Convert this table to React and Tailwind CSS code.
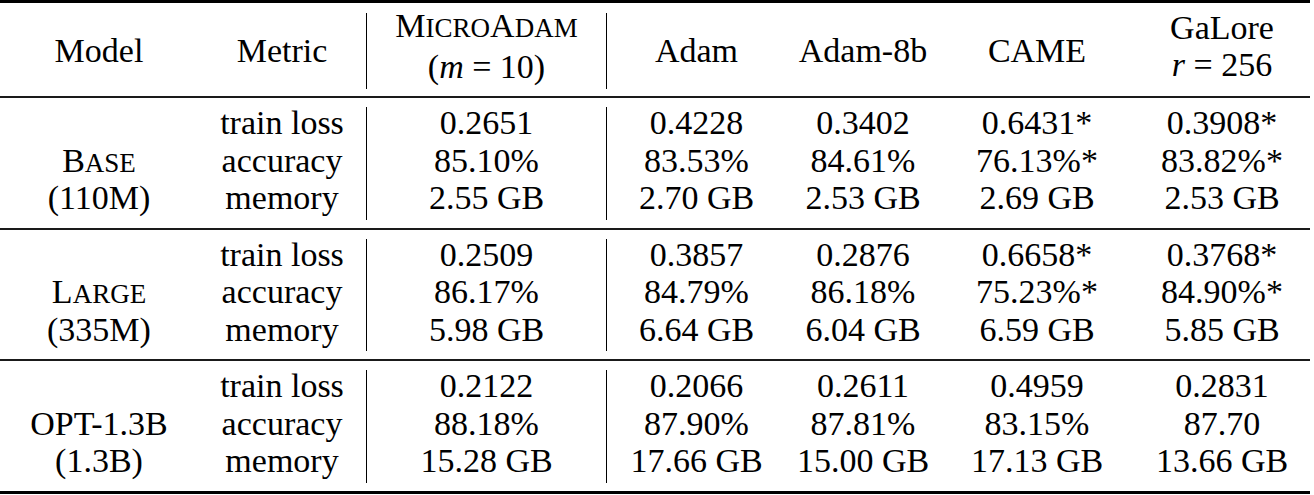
import React from 'react';

// column widths follow the LaTeX tabular in the screenshot
const cols = 'grid grid-cols-[198px_168px_240px_180px_154px_194px_176px]';

// LaTeX-style small caps: first letter full size, rest at ~0.8
const Sc = ({ first, rest }) => (
    <span>
        {first}
        <span className="text-[27px]">{rest}</span>
    </span>
);

const sections = [
    {
        model: [<Sc first="B" rest="ASE" />, '(110M)'],
        data: [
            ['0.2651', '85.10%', '2.55 GB'],
            ['0.4228', '83.53%', '2.70 GB'],
            ['0.3402', '84.61%', '2.53 GB'],
            ['0.6431*', '76.13%*', '2.69 GB'],
            ['0.3908*', '83.82%*', '2.53 GB'],
        ],
    },
    {
        model: [<Sc first="L" rest="ARGE" />, '(335M)'],
        data: [
            ['0.2509', '86.17%', '5.98 GB'],
            ['0.3857', '84.79%', '6.64 GB'],
            ['0.2876', '86.18%', '6.04 GB'],
            ['0.6658*', '75.23%*', '6.59 GB'],
            ['0.3768*', '84.90%*', '5.85 GB'],
        ],
    },
    {
        model: ['OPT-1.3B', '(1.3B)'],
        data: [
            ['0.2122', '88.18%', '15.28 GB'],
            ['0.2066', '87.90%', '17.66 GB'],
            ['0.2611', '87.81%', '15.00 GB'],
            ['0.4959', '83.15%', '17.13 GB'],
            ['0.2831', '87.70', '13.66 GB'],
        ],
    },
];

const metrics = ['train loss', 'accuracy', 'memory'];

const Column = ({ lines, bar }) => (
    <div className={bar ? 'border-l-[1.5px] border-black' : ''}>
        <div className="flex flex-col items-center -mt-[3px] mb-[3px]">
            {lines.map((line, i) => (
                <div key={i} className="h-[37.5px] whitespace-nowrap">{line}</div>
            ))}
        </div>
    </div>
);

const MidRule = () => <div className="h-[2px] bg-[#1a1a1a]"></div>;

const App = () => {
    return (
        <div className="w-[1314px] h-[495px] bg-white text-black font-['Liberation_Serif',serif] text-[34px] leading-[37.5px]">
            <div className="w-[1310px]">
                <div className="h-[3px] bg-black"></div>

                {/* header */}
                <div className={`${cols} grid-rows-[76px] h-[93px] pt-[10px] pb-[7px]`}>
                    <div className="flex items-center justify-center">Model</div>
                    <div className="flex items-center justify-center">Metric</div>
                    <div className="flex flex-col items-center justify-center border-l-[1.5px] border-black pb-[10px]">
                        <div className="flex items-baseline">
                            <Sc first="M" rest="ICRO" />
                            <Sc first="A" rest="DAM" />
                        </div>
                        <div>(<i>m</i> = 10)</div>
                    </div>
                    <div className="flex items-center justify-center border-l-[1.5px] border-black">Adam</div>
                    <div className="flex items-center justify-center">Adam-8b</div>
                    <div className="flex items-center justify-center">CAME</div>
                    <div className="flex flex-col items-center justify-center pb-[10px]">
                        <div>GaLore</div>
                        <div><i>r</i> = 256</div>
                    </div>
                </div>

                {sections.map((section, index) => (
                    <div key={index}>
                        <MidRule />
                        <div className={`${cols} pt-[9px] pb-[8px]`}>
                            <Column lines={['', section.model[0], section.model[1]]} />
                            <Column lines={metrics} />
                            {section.data.map((values, i) => (
                                <Column key={i} lines={values} bar={i < 2} />
                            ))}
                        </div>
                    </div>
                ))}

                <div className="h-[3px] bg-black"></div>
            </div>
        </div>
    );
};

export default App;
